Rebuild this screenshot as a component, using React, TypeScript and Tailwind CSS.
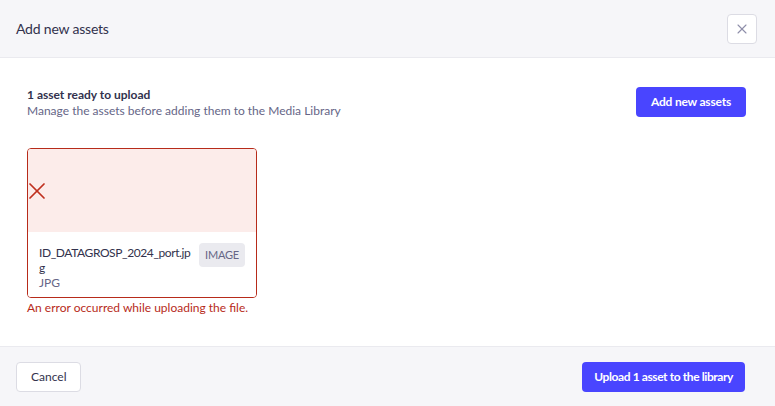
import { X } from 'lucide-react';

export default function App() {
	return (
		<div
			className="flex h-[406px] w-[775px] flex-col bg-white text-[#32324d]"
			style={{ fontFamily: 'Lato, "Noto Sans", sans-serif' }}
		>
			<header className="flex h-[58px] shrink-0 items-center justify-between border-b border-[#eaeaef] bg-[#f6f6f9] pl-4 pr-[18px]">
				<h2 className="text-sm tracking-[-0.2px] text-[#32324d]">Add new assets</h2>
				<button className="flex h-[30px] w-[30px] items-center justify-center rounded border border-[#dcdce4] bg-white text-[#8e8ea9]">
					<X className="h-4 w-4" strokeWidth={1.6} />
				</button>
			</header>

			<main className="flex flex-1 flex-col px-[27px] pt-[28px]">
				<div className="flex items-start justify-between">
					<div className="pt-[1px]">
						<p className="text-xs font-bold leading-4 text-[#32324d]">1 asset ready to upload</p>
						<p className="text-xs leading-4 text-[#666687]">
							Manage the assets before adding them to the Media Library
						</p>
					</div>
					<button className="mr-[2px] mt-[1px] h-[30px] rounded bg-[#4945ff] px-[15px] text-xs font-bold tracking-[-0.2px] text-white">
						Add new assets
					</button>
				</div>

				<div className="mt-[29px] w-[230px] overflow-hidden rounded border border-[#b72b1a]">
					<div className="flex h-[83px] items-center bg-[#fcecea]">
						<X className="-ml-[5px] h-7 w-7 text-[#c0301f]" strokeWidth={1.5} />
					</div>
					<div className="flex items-start justify-between gap-2 bg-white px-[11px] pb-[6px] pt-[10px]">
						<div className="w-[152px] break-all pt-[3px]">
							<p className="text-xs leading-[15px] tracking-[-0.4px] text-[#32324d]">
								ID_DATAGROSP_2024_port.jpg
							</p>
							<p className="text-xs leading-4 text-[#666687]">JPG</p>
						</div>
						<span className="mt-[1px] flex h-6 items-center rounded bg-[#eaeaef] px-[6px] text-[11px] tracking-[-0.2px] text-[#666687]">
							IMAGE
						</span>
					</div>
				</div>
				<p className="mt-[2px] text-xs text-[#b72b1a]">An error occurred while uploading the file.</p>
			</main>

			<footer className="flex h-[60px] shrink-0 items-center justify-between border-t border-[#eaeaef] bg-[#f6f6f9] pl-4 pr-[30px]">
				<button className="h-[30px] rounded border border-[#dcdce4] bg-white px-[14px] text-xs text-[#32324d]">
					Cancel
				</button>
				<button className="h-[30px] rounded bg-[#4945ff] px-3 text-xs font-bold tracking-[-0.4px] text-white">
					Upload 1 asset to the library
				</button>
			</footer>
		</div>
	);
}
